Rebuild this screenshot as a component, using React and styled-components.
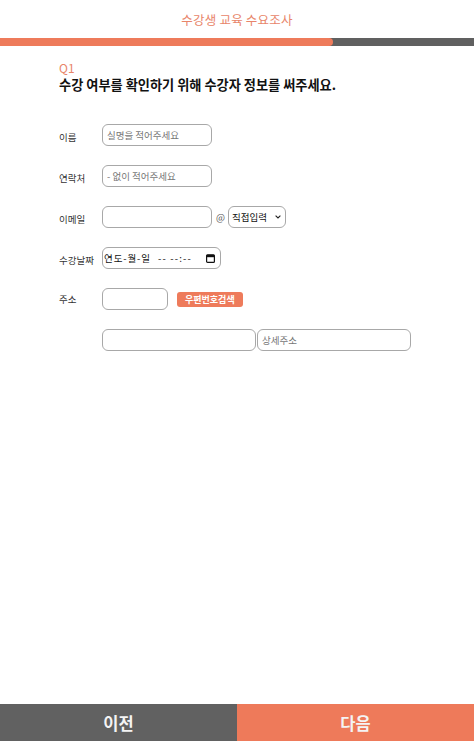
import React from "react";
import styled, { createGlobalStyle } from "styled-components";

const Global = createGlobalStyle`
  html, body { margin: 0; padding: 0; background: #fff; }
  body { font-family: "Noto Sans CJK KR", "Noto Sans", sans-serif; }
  * { box-sizing: border-box; }
`;

const Page = styled.div`
  min-height: 100vh;
  display: flex;
  flex-direction: column;
`;

const Header = styled.header`
  height: 38px;
  display: flex;
  align-items: center;
  justify-content: center;
  color: #e8856a;
  font-size: 12.5px;
  letter-spacing: 0.2px;
`;

const Progress = styled.div`
  height: 8px;
  background: #606060;
  display: flex;
`;

const ProgressFill = styled.div`
  background: #ee7b5b;
  border-radius: 0 4px 4px 0;
  height: 100%;
`;

const Main = styled.main`
  flex: 1;
  padding: 16px 0 0 59px;
`;

const QNum = styled.div`
  color: #e8856a;
  font-size: 12px;
  line-height: 12px;
  margin-bottom: 3px;
`;

const QTitle = styled.h1`
  margin: 0;
  font-size: 13.2px;
  line-height: 16px;
  font-weight: 700;
  color: #111;
`;

const Form = styled.div`
  margin-top: 31px;
  display: flex;
  flex-direction: column;
  gap: 19px;
`;

const Row = styled.div`
  display: flex;
  align-items: center;
  height: 22px;
`;

const Label = styled.div`
  width: 43px;
  font-size: 9.5px;
  color: #333;
  padding-top: ${(p) => p.$dy ?? 4}px;
`;

const Input = styled.input`
  width: ${(p) => p.$w}px;
  height: 22px;
  border: 1px solid #a8a8a8;
  border-radius: 6px;
  padding: 0 4px;
  font-family: "Noto Sans CJK KR", sans-serif;
  font-size: 9.5px;
  color: #222;
  outline: none;
  &::placeholder { color: #777; }
`;

const At = styled.span`
  font-size: 9.5px;
  color: #555;
  margin: 0 3px 0 4px;
`;

const SelectWrap = styled.div`
  position: relative;
  width: 58px;
  height: 22px;
`;

const Select = styled.select`
  appearance: none;
  display: block;
  width: 100%;
  height: 22px;
  border: 1px solid #a8a8a8;
  border-radius: 6px;
  font-family: "Noto Sans CJK KR", sans-serif;
  font-size: 9.5px;
  color: #111;
  background: #fff;
  padding: 0 0 0 3px;
`;

const Chevron = styled.svg`
  position: absolute;
  right: 5px;
  top: 9px;
  pointer-events: none;
`;

const DateBox = styled.div`
  width: 119px;
  height: 22px;
  border: 1px solid #a8a8a8;
  border-radius: 6px;
  display: flex;
  align-items: center;
  padding: 0 5px 0 1px;
  font-size: 9.5px;
  color: #111;
  gap: 7px;
  overflow: hidden;
`;

const DatePart = styled.span`
  letter-spacing: ${(p) => p.$ls || 0}px;
  white-space: pre;
  flex: none;
`;

const DateSpacer = styled.span`
  flex: 1;
`;

const CalSvg = styled.svg`
  flex: none;
`;

const ZipButton = styled.button`
  margin-left: 9px;
  height: 15px;
  padding: 0 8px;
  border: none;
  border-radius: 3px;
  background: #ee7b5b;
  color: #fff;
  font-family: "Noto Sans CJK KR", sans-serif;
  font-size: 9px;
  font-weight: 700;
  line-height: 15px;
`;

const Indent = styled.div`
  width: 43px;
`;

const Footer = styled.footer`
  display: grid;
  grid-template-columns: 1fr 1fr;
  height: 37px;
`;

const NavButton = styled.button`
  border: none;
  background: ${(p) => (p.$primary ? "#ee7a5a" : "#616161")};
  color: #f4f4f4;
  font-family: "Noto Sans CJK KR", sans-serif;
  font-size: 16.5px;
  font-weight: 700;
  padding: 0;
`;

const CalendarIcon = () => (
  <CalSvg width="9" height="9" viewBox="0 0 9 9">
    <rect x="0.6" y="0.8" width="7.8" height="7.6" rx="1" fill="none" stroke="#111" strokeWidth="1.2" />
    <rect x="0.6" y="0.8" width="7.8" height="2.4" fill="#111" />
  </CalSvg>
);

export default function App() {
  return (
    <Page>
      <Global />
      <Header>수강생 교육 수요조사</Header>
      <Progress>
        <ProgressFill style={{ width: `${(333 / 474) * 100}%` }} />
      </Progress>
      <Main>
        <QNum>Q1</QNum>
        <QTitle>수강 여부를 확인하기 위해 수강자 정보를 써주세요.</QTitle>
        <Form>
          <Row>
            <Label>이름</Label>
            <Input $w={110} placeholder="실명을 적어주세요" />
          </Row>
          <Row>
            <Label>연락처</Label>
            <Input $w={110} placeholder="- 없이 적어주세요" />
          </Row>
          <Row>
            <Label>이메일</Label>
            <Input $w={110} />
            <At>@</At>
            <SelectWrap>
              <Select defaultValue="direct">
                <option value="direct">직접입력</option>
              </Select>
              <Chevron width="6" height="4" viewBox="0 0 6 4">
                <path d="M0.6 0.6 L3 3 L5.4 0.6" fill="none" stroke="#222" strokeWidth="1.1" />
              </Chevron>
            </SelectWrap>
          </Row>
          <Row>
            <Label>수강날짜</Label>
            <DateBox>
              <DatePart $ls={0.9}>연도-월-일</DatePart>
              <DatePart $ls={1.2}>-- --:--</DatePart>
              <DateSpacer />
              <CalendarIcon />
            </DateBox>
          </Row>
          <Row>
            <Label $dy={0}>주소</Label>
            <Input $w={66} />
            <ZipButton>우편번호검색</ZipButton>
          </Row>
          <Row>
            <Indent />
            <Input $w={154} />
            <Input $w={154} placeholder="상세주소" style={{ marginLeft: 1 }} />
          </Row>
        </Form>
      </Main>
      <Footer>
        <NavButton>이전</NavButton>
        <NavButton $primary>다음</NavButton>
      </Footer>
    </Page>
  );
}
